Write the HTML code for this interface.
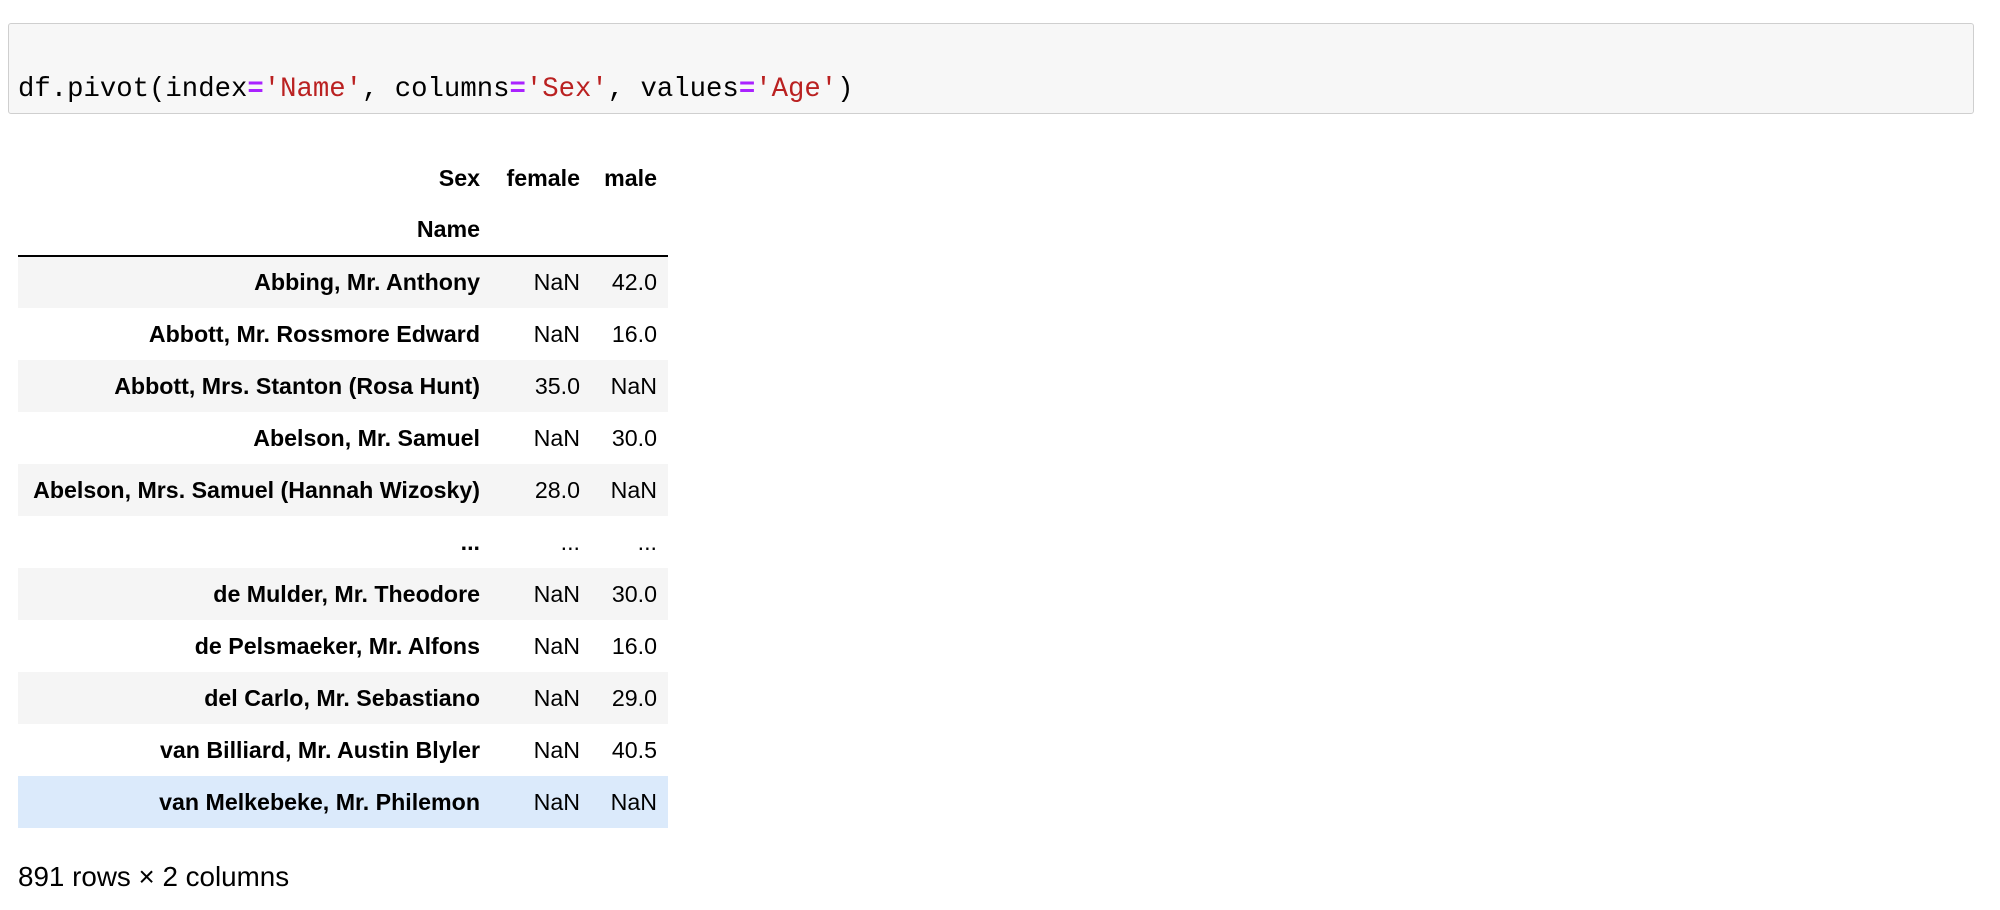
<!DOCTYPE html>
<html><head><meta charset="utf-8"><style>
html,body{margin:0;padding:0;background:#fff;width:2000px;height:910px;overflow:hidden}
.code{position:absolute;left:8px;top:23px;width:1966px;height:91px;background:#f7f7f7;border:1.5px solid #cfcfcf;border-radius:3px;box-sizing:border-box}
.code pre{position:absolute;left:9px;top:51px;margin:0;font-family:"Liberation Mono",monospace;font-size:27.3px;line-height:30px;color:#000}
.s{color:#ba2121}.o{color:#aa22ff;font-weight:bold}
table{position:absolute;left:18px;top:152px;border-collapse:collapse;font-family:"Liberation Sans",Arial,sans-serif;font-size:23.2px;table-layout:fixed;width:650px}
td,th{height:52px;padding:0 11px;text-align:right;white-space:nowrap;box-sizing:border-box;overflow:visible}
th{font-weight:bold}
col.c0{width:473px}col.c1{width:100px}col.c2{width:77px}
tr.g td,tr.g th{background:#f5f5f5}
tr.h td,tr.h th{background:#dbeafb}
tr.line th,tr.line td{border-bottom:2px solid #000;height:52px}
.foot{position:absolute;left:18px;top:861px;font-family:"Liberation Sans",Arial,sans-serif;font-size:27.8px;color:#000}
</style></head><body>
<div class="code"><pre>df.pivot(index<span class="o">=</span><span class="s">'Name'</span>, columns<span class="o">=</span><span class="s">'Sex'</span>, values<span class="o">=</span><span class="s">'Age'</span>)</pre></div>
<table>
<colgroup><col class="c0"><col class="c1"><col class="c2"></colgroup>
<tr><th>Sex</th><th>female</th><th>male</th></tr>
<tr class="line"><th>Name</th><th></th><th></th></tr>
<tr class="g"><th>Abbing, Mr. Anthony</th><td>NaN</td><td>42.0</td></tr>
<tr><th>Abbott, Mr. Rossmore Edward</th><td>NaN</td><td>16.0</td></tr>
<tr class="g"><th>Abbott, Mrs. Stanton (Rosa Hunt)</th><td>35.0</td><td>NaN</td></tr>
<tr><th>Abelson, Mr. Samuel</th><td>NaN</td><td>30.0</td></tr>
<tr class="g"><th>Abelson, Mrs. Samuel (Hannah Wizosky)</th><td>28.0</td><td>NaN</td></tr>
<tr><th>...</th><td>...</td><td>...</td></tr>
<tr class="g"><th>de Mulder, Mr. Theodore</th><td>NaN</td><td>30.0</td></tr>
<tr><th>de Pelsmaeker, Mr. Alfons</th><td>NaN</td><td>16.0</td></tr>
<tr class="g"><th>del Carlo, Mr. Sebastiano</th><td>NaN</td><td>29.0</td></tr>
<tr><th>van Billiard, Mr. Austin Blyler</th><td>NaN</td><td>40.5</td></tr>
<tr class="h"><th>van Melkebeke, Mr. Philemon</th><td>NaN</td><td>NaN</td></tr>
</table>
<div class="foot">891 rows × 2 columns</div>
</body></html>
